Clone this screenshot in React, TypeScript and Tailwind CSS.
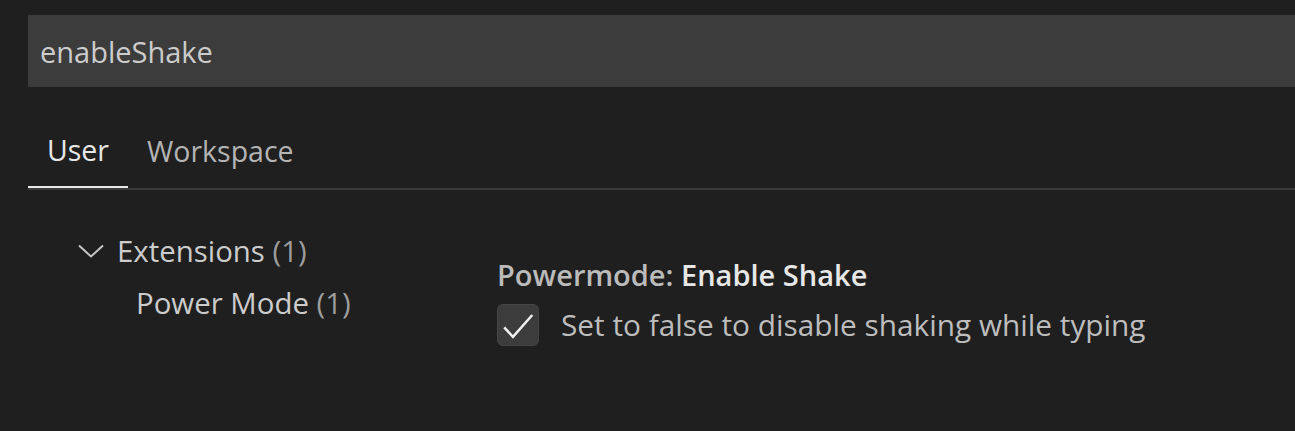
import React from 'react';

const font = { fontFamily: '"Open Sans", "Noto Sans", "Liberation Sans", sans-serif' };

function Chevron() {
  return (
    <svg width="26" height="14" viewBox="0 0 26 14" className="shrink-0">
      <path d="M1 1.5 L13 12.5 L25 1.5" fill="none" stroke="#c5c5c5" strokeWidth="2" />
    </svg>
  );
}

function Checkbox() {
  return (
    <div className="w-[42px] h-[42px] rounded-[6px] bg-[#3c3c3c] border border-[#454545] flex items-center justify-center shrink-0">
      <svg width="42" height="42" viewBox="0 0 42 42">
        <path d="M6.5 23.5 L15.7 33.5 L36 10.5" fill="none" stroke="#f0f0f0" strokeWidth="2.6" />
      </svg>
    </div>
  );
}

export default function App() {
  return (
    <div className="w-full h-[431px] bg-[#1f1f1f] pl-[28px] pt-[15px] overflow-hidden" style={font}>
      {/* Search */}
      <div className="h-[72px] bg-[#3c3c3c] flex items-center pl-[12px]">
        <span className="text-[29px] text-[#cccccc] leading-none">enableShake</span>
      </div>

      {/* Tabs */}
      <div className="mt-[24px] flex border-b-2 border-[#3a3a3a]">
        <div className="px-[19px] h-[77px] pt-[3px] flex items-center border-b-2 border-[#e7e7e7] -mb-[2px] text-[28.5px] text-[#e7e7e7]">
          User
        </div>
        <div className="px-[19px] h-[77px] pt-[3px] flex items-center text-[28.5px] text-[#b4b4b4]">
          Workspace
        </div>
      </div>

      {/* Body */}
      <div className="flex">
        <div className="w-[469px] pt-[35px] text-[29.4px]">
          <div className="h-[52px] flex items-center pl-[50px] gap-[13px]">
            <Chevron />
            <span className="text-[#cccccc]">
              Extensions <span className="text-[#9d9d9d]">(1)</span>
            </span>
          </div>
          <div className="h-[52px] flex items-center pl-[108px]">
            <span className="text-[#cccccc]">
              Power Mode <span className="text-[#9d9d9d]">(1)</span>
            </span>
          </div>
        </div>

        <div className="pt-[67px]">
          <div className="text-[29px] font-semibold leading-[36px]">
            <span className="text-[#bbbbbb]">Powermode: </span>
            <span className="text-[#e7e7e7]">Enable Shake</span>
          </div>
          <div className="mt-[10px] flex items-center gap-[22px]">
            <Checkbox />
            <span className="text-[29.8px] text-[#bdbdbd]">Set to false to disable shaking while typing</span>
          </div>
        </div>
      </div>
    </div>
  );
}
